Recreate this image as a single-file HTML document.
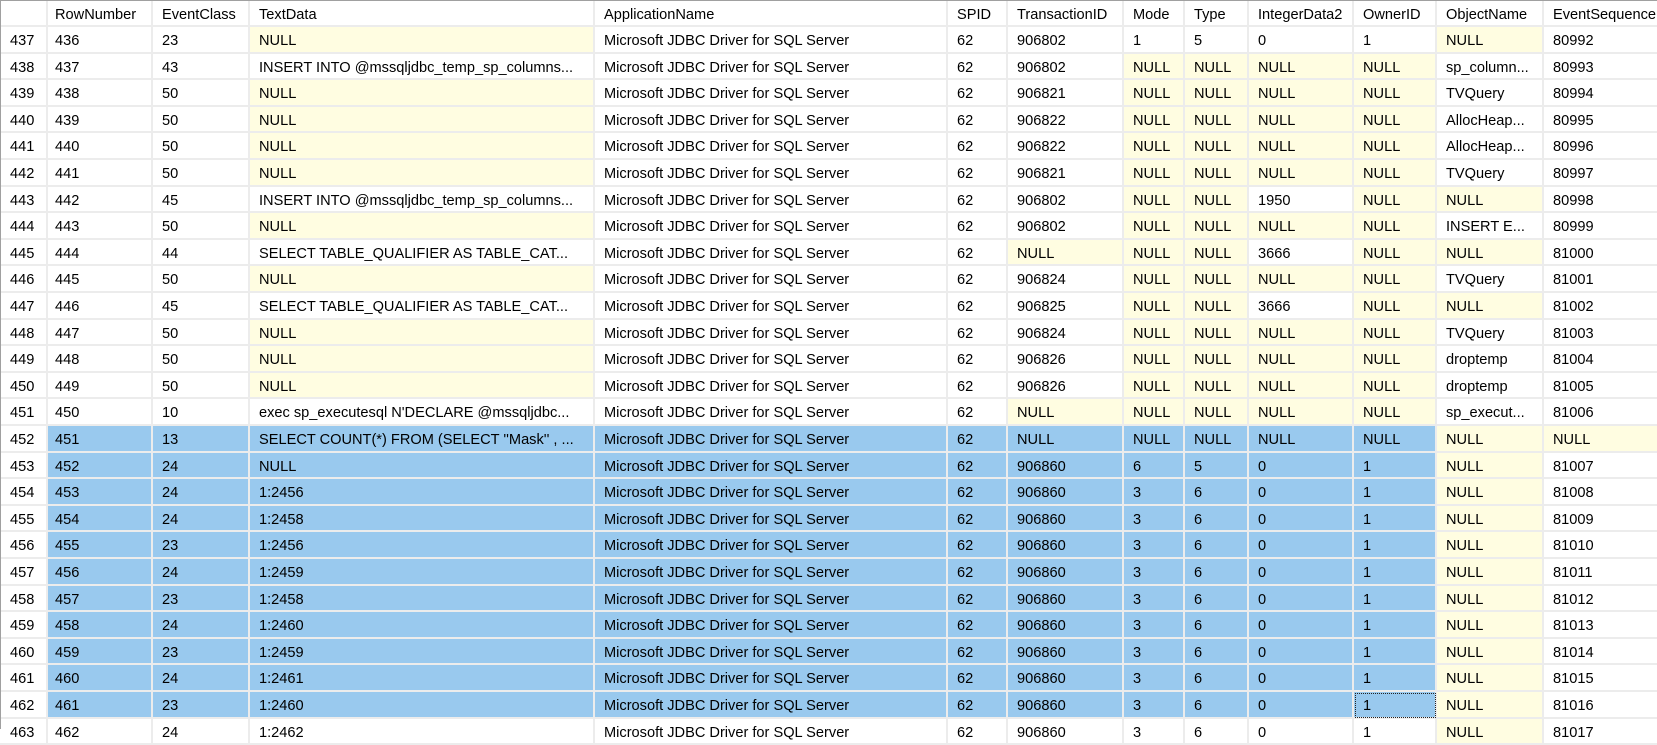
<!DOCTYPE html>
<html><head><meta charset="utf-8"><style>
body{margin:0;width:1657px;height:729px;overflow:hidden;background:#fff;font-family:"Liberation Sans",Arial,sans-serif;font-size:14.6px;color:#000;position:relative}
.r{position:absolute;left:0;height:26.6px;width:1700px;display:flex;white-space:nowrap}
.r span{box-sizing:border-box;height:100%;border-right:2px solid #ececec;border-bottom:2px solid #ececec;padding:4px 0 0 9px;line-height:20px;overflow:hidden;flex:none}
.h{top:0;height:27px}
.h span{padding-top:5px}
.r span:nth-child(1){width:48px;padding-left:10px;background:#fff!important}
.r span:nth-child(2){width:105px;padding-left:7px}
.r span:nth-child(3){width:97px}
.r span:nth-child(4){width:345px}
.r span:nth-child(5){width:353px}
.r span:nth-child(6){width:60px}
.r span:nth-child(7){width:116px}
.r span:nth-child(8){width:61px}
.r span:nth-child(9){width:64px}
.r span:nth-child(10){width:105px}
.r span:nth-child(11){width:83px}
.r span:nth-child(12){width:107px}
.r span:nth-child(13){width:160px}
.y{background:#fffde1}
.s span:nth-child(n+2):nth-child(-n+11){background:#99c9ee}
.f{outline:1px dotted #222;outline-offset:-2px}
#fl{position:absolute;left:0;top:0;width:1px;height:729px;background:#a0a0a0}
#ft{position:absolute;left:0;top:0;width:1657px;height:1px;background:#a0a0a0}
</style></head><body>
<div class="r h"><span></span><span>RowNumber</span><span>EventClass</span><span>TextData</span><span>ApplicationName</span><span>SPID</span><span>TransactionID</span><span>Mode</span><span>Type</span><span>IntegerData2</span><span>OwnerID</span><span>ObjectName</span><span>EventSequence</span></div>
<div class="r" style="top:27px"><span>437</span><span>436</span><span>23</span><span class="y">NULL</span><span>Microsoft JDBC Driver for SQL Server</span><span>62</span><span>906802</span><span>1</span><span>5</span><span>0</span><span>1</span><span class="y">NULL</span><span>80992</span></div>
<div class="r" style="top:53.6px"><span>438</span><span>437</span><span>43</span><span>INSERT INTO @mssqljdbc_temp_sp_columns...</span><span>Microsoft JDBC Driver for SQL Server</span><span>62</span><span>906802</span><span class="y">NULL</span><span class="y">NULL</span><span class="y">NULL</span><span class="y">NULL</span><span>sp_column...</span><span>80993</span></div>
<div class="r" style="top:80.2px"><span>439</span><span>438</span><span>50</span><span class="y">NULL</span><span>Microsoft JDBC Driver for SQL Server</span><span>62</span><span>906821</span><span class="y">NULL</span><span class="y">NULL</span><span class="y">NULL</span><span class="y">NULL</span><span>TVQuery</span><span>80994</span></div>
<div class="r" style="top:106.8px"><span>440</span><span>439</span><span>50</span><span class="y">NULL</span><span>Microsoft JDBC Driver for SQL Server</span><span>62</span><span>906822</span><span class="y">NULL</span><span class="y">NULL</span><span class="y">NULL</span><span class="y">NULL</span><span>AllocHeap...</span><span>80995</span></div>
<div class="r" style="top:133.4px"><span>441</span><span>440</span><span>50</span><span class="y">NULL</span><span>Microsoft JDBC Driver for SQL Server</span><span>62</span><span>906822</span><span class="y">NULL</span><span class="y">NULL</span><span class="y">NULL</span><span class="y">NULL</span><span>AllocHeap...</span><span>80996</span></div>
<div class="r" style="top:160px"><span>442</span><span>441</span><span>50</span><span class="y">NULL</span><span>Microsoft JDBC Driver for SQL Server</span><span>62</span><span>906821</span><span class="y">NULL</span><span class="y">NULL</span><span class="y">NULL</span><span class="y">NULL</span><span>TVQuery</span><span>80997</span></div>
<div class="r" style="top:186.6px"><span>443</span><span>442</span><span>45</span><span>INSERT INTO @mssqljdbc_temp_sp_columns...</span><span>Microsoft JDBC Driver for SQL Server</span><span>62</span><span>906802</span><span class="y">NULL</span><span class="y">NULL</span><span>1950</span><span class="y">NULL</span><span class="y">NULL</span><span>80998</span></div>
<div class="r" style="top:213.2px"><span>444</span><span>443</span><span>50</span><span class="y">NULL</span><span>Microsoft JDBC Driver for SQL Server</span><span>62</span><span>906802</span><span class="y">NULL</span><span class="y">NULL</span><span class="y">NULL</span><span class="y">NULL</span><span>INSERT E...</span><span>80999</span></div>
<div class="r" style="top:239.8px"><span>445</span><span>444</span><span>44</span><span>SELECT TABLE_QUALIFIER AS TABLE_CAT...</span><span>Microsoft JDBC Driver for SQL Server</span><span>62</span><span class="y">NULL</span><span class="y">NULL</span><span class="y">NULL</span><span>3666</span><span class="y">NULL</span><span class="y">NULL</span><span>81000</span></div>
<div class="r" style="top:266.4px"><span>446</span><span>445</span><span>50</span><span class="y">NULL</span><span>Microsoft JDBC Driver for SQL Server</span><span>62</span><span>906824</span><span class="y">NULL</span><span class="y">NULL</span><span class="y">NULL</span><span class="y">NULL</span><span>TVQuery</span><span>81001</span></div>
<div class="r" style="top:293px"><span>447</span><span>446</span><span>45</span><span>SELECT TABLE_QUALIFIER AS TABLE_CAT...</span><span>Microsoft JDBC Driver for SQL Server</span><span>62</span><span>906825</span><span class="y">NULL</span><span class="y">NULL</span><span>3666</span><span class="y">NULL</span><span class="y">NULL</span><span>81002</span></div>
<div class="r" style="top:319.6px"><span>448</span><span>447</span><span>50</span><span class="y">NULL</span><span>Microsoft JDBC Driver for SQL Server</span><span>62</span><span>906824</span><span class="y">NULL</span><span class="y">NULL</span><span class="y">NULL</span><span class="y">NULL</span><span>TVQuery</span><span>81003</span></div>
<div class="r" style="top:346.2px"><span>449</span><span>448</span><span>50</span><span class="y">NULL</span><span>Microsoft JDBC Driver for SQL Server</span><span>62</span><span>906826</span><span class="y">NULL</span><span class="y">NULL</span><span class="y">NULL</span><span class="y">NULL</span><span>droptemp</span><span>81004</span></div>
<div class="r" style="top:372.8px"><span>450</span><span>449</span><span>50</span><span class="y">NULL</span><span>Microsoft JDBC Driver for SQL Server</span><span>62</span><span>906826</span><span class="y">NULL</span><span class="y">NULL</span><span class="y">NULL</span><span class="y">NULL</span><span>droptemp</span><span>81005</span></div>
<div class="r" style="top:399.4px"><span>451</span><span>450</span><span>10</span><span>exec sp_executesql N'DECLARE @mssqljdbc...</span><span>Microsoft JDBC Driver for SQL Server</span><span>62</span><span class="y">NULL</span><span class="y">NULL</span><span class="y">NULL</span><span class="y">NULL</span><span class="y">NULL</span><span>sp_execut...</span><span>81006</span></div>
<div class="r s" style="top:426px"><span>452</span><span>451</span><span>13</span><span>SELECT COUNT(*) FROM (SELECT ''Mask'' , ...</span><span>Microsoft JDBC Driver for SQL Server</span><span>62</span><span>NULL</span><span>NULL</span><span>NULL</span><span>NULL</span><span>NULL</span><span class="y">NULL</span><span class="y">NULL</span></div>
<div class="r s" style="top:452.6px"><span>453</span><span>452</span><span>24</span><span>NULL</span><span>Microsoft JDBC Driver for SQL Server</span><span>62</span><span>906860</span><span>6</span><span>5</span><span>0</span><span>1</span><span class="y">NULL</span><span>81007</span></div>
<div class="r s" style="top:479.2px"><span>454</span><span>453</span><span>24</span><span>1:2456</span><span>Microsoft JDBC Driver for SQL Server</span><span>62</span><span>906860</span><span>3</span><span>6</span><span>0</span><span>1</span><span class="y">NULL</span><span>81008</span></div>
<div class="r s" style="top:505.8px"><span>455</span><span>454</span><span>24</span><span>1:2458</span><span>Microsoft JDBC Driver for SQL Server</span><span>62</span><span>906860</span><span>3</span><span>6</span><span>0</span><span>1</span><span class="y">NULL</span><span>81009</span></div>
<div class="r s" style="top:532.4px"><span>456</span><span>455</span><span>23</span><span>1:2456</span><span>Microsoft JDBC Driver for SQL Server</span><span>62</span><span>906860</span><span>3</span><span>6</span><span>0</span><span>1</span><span class="y">NULL</span><span>81010</span></div>
<div class="r s" style="top:559px"><span>457</span><span>456</span><span>24</span><span>1:2459</span><span>Microsoft JDBC Driver for SQL Server</span><span>62</span><span>906860</span><span>3</span><span>6</span><span>0</span><span>1</span><span class="y">NULL</span><span>81011</span></div>
<div class="r s" style="top:585.6px"><span>458</span><span>457</span><span>23</span><span>1:2458</span><span>Microsoft JDBC Driver for SQL Server</span><span>62</span><span>906860</span><span>3</span><span>6</span><span>0</span><span>1</span><span class="y">NULL</span><span>81012</span></div>
<div class="r s" style="top:612.2px"><span>459</span><span>458</span><span>24</span><span>1:2460</span><span>Microsoft JDBC Driver for SQL Server</span><span>62</span><span>906860</span><span>3</span><span>6</span><span>0</span><span>1</span><span class="y">NULL</span><span>81013</span></div>
<div class="r s" style="top:638.8px"><span>460</span><span>459</span><span>23</span><span>1:2459</span><span>Microsoft JDBC Driver for SQL Server</span><span>62</span><span>906860</span><span>3</span><span>6</span><span>0</span><span>1</span><span class="y">NULL</span><span>81014</span></div>
<div class="r s" style="top:665.4px"><span>461</span><span>460</span><span>24</span><span>1:2461</span><span>Microsoft JDBC Driver for SQL Server</span><span>62</span><span>906860</span><span>3</span><span>6</span><span>0</span><span>1</span><span class="y">NULL</span><span>81015</span></div>
<div class="r s" style="top:692px"><span>462</span><span>461</span><span>23</span><span>1:2460</span><span>Microsoft JDBC Driver for SQL Server</span><span>62</span><span>906860</span><span>3</span><span>6</span><span>0</span><span class="f">1</span><span class="y">NULL</span><span>81016</span></div>
<div class="r" style="top:718.6px"><span>463</span><span>462</span><span>24</span><span>1:2462</span><span>Microsoft JDBC Driver for SQL Server</span><span>62</span><span>906860</span><span>3</span><span>6</span><span>0</span><span>1</span><span class="y">NULL</span><span>81017</span></div>
<div id="fl"></div><div id="ft"></div>
</body></html>
